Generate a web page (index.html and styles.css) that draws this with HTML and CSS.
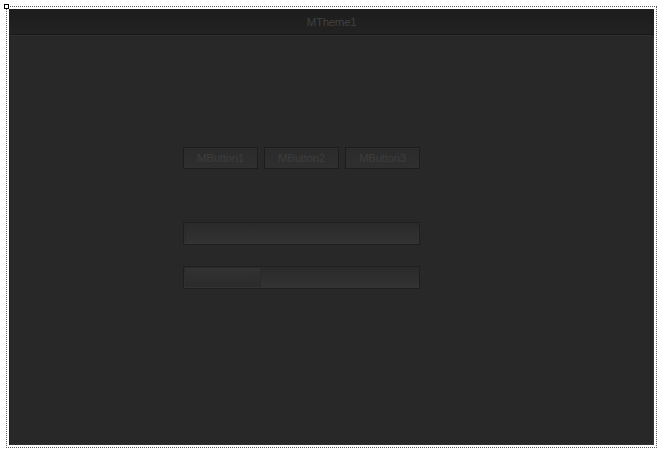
FILE: index.html
```html
<!DOCTYPE html>
<html>
<head>
<meta charset="utf-8">
<link rel="stylesheet" href="styles.css">
</head>
<body>
<div class="designer">
  <span class="handle"></span>
  <div class="frame">
    <div class="form">
      <div class="titlebar"><span class="title">MTheme1</span></div>
      <div class="client">
        <div class="column">
          <div class="buttons">
            <div class="mbutton">MButton1</div>
            <div class="mbutton">MButton2</div>
            <div class="mbutton">MButton3</div>
          </div>
          <div class="progress first"><div class="fill" style="width:0%"></div></div>
          <div class="progress second"><div class="fill" style="width:32%"></div></div>
        </div>
      </div>
    </div>
  </div>
</div>
</body>
</html>
```

FILE: styles.css
```css
html, body {
  margin: 0;
  padding: 0;
  background: #ffffff;
}
body {
  width: 662px;
  height: 455px;
  overflow: hidden;
  font-family: "Liberation Sans", Arial, sans-serif;
}
.designer {
  position: relative;
  padding: 6px 0 0 6px;
}
.handle {
  position: absolute;
  left: 4px;
  top: 4px;
  width: 3px;
  height: 3px;
  border: 1px solid #000;
  background: #fff;
  z-index: 2;
}
.frame {
  width: 645px;
  height: 436px;
  padding: 2px;
  border: 1px dotted #5a5a5a;
}
.form {
  width: 645px;
  height: 436px;
  background: #282828;
  display: flex;
  flex-direction: column;
  box-shadow: inset 1px 0 0 #1e1e1e, inset -1px 0 0 #333, inset 0 -1px 0 #333;
}
.titlebar {
  height: 25px;
  flex: none;
  background: linear-gradient(#1d1d1d, #222222);
  border-bottom: 1px solid #191919;
  box-shadow: 0 1px 0 #2e2e2e;
  display: flex;
  align-items: center;
  justify-content: center;
}
.title {
  color: #404040;
  font-size: 11.5px;
  letter-spacing: -0.3px;
  padding-top: 1px;
}
.client {
  flex: 1;
  padding: 112px 0 0 174px;
}
.column {
  width: 237px;
  display: flex;
  flex-direction: column;
}
.buttons {
  display: flex;
  justify-content: space-between;
}
.mbutton {
  width: 73px;
  height: 20px;
  border: 1px solid #1d1d1d;
  background: linear-gradient(#2b2b2b, #2f2f2f);
  box-shadow: inset 0 1px 0 #2f2f2f;
  color: #3d3d3d;
  font-size: 11.5px;
  letter-spacing: -0.3px;
  display: flex;
  align-items: center;
  justify-content: center;
}
.progress {
  height: 21px;
  border: 1px solid #1f1f1f;
  background: linear-gradient(#2a2a2a, #333333);
  display: flex;
}
.progress.first {
  margin-top: 53px;
}
.progress.second {
  margin-top: 21px;
}
.fill {
  height: 19px;
  margin: 1px;
  background: linear-gradient(#323232, #2b2b2b);
  border-right: 1px solid #2a2a2a;
}
```
